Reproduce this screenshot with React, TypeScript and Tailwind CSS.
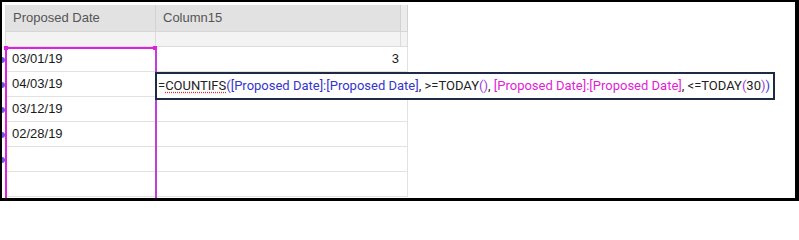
import React from "react";

const rows = ["03/01/19", "04/03/19", "03/12/19", "02/28/19", "", ""];

export default function App() {
  const blue = "text-[#3535cc]";
  const mag = "text-[#e01ed6]";
  const purp = "text-[#9b3be0]";
  return (
    <div className="w-[799px] h-[201px] bg-white border-l-2 border-t-2 border-r-4 border-b-[3px] border-black relative overflow-hidden font-['Liberation_Sans',Arial,sans-serif]">
      <div className="pl-[3px] pt-[3px] h-full">
        <div className="w-[403px] border-l border-[#dedede]">
          {/* header */}
          <div className="flex h-[27px] bg-[#e2e2e2] border-b border-[#d6d6d6] text-[13px] text-[#555]">
            <div className="w-[150px] border-r border-[#d2d2d2] flex items-center pl-[7px]">Proposed Date</div>
            <div className="w-[245px] border-r border-[#d2d2d2] flex items-center pl-[7px]">Column15</div>
            <div className="w-[7px] bg-[#ececec] border-r border-[#d2d2d2]" />
          </div>
          <div className="flex h-[15px] bg-[#f3f3f3] border-b border-[#dcdcdc]">
            <div className="w-[150px] border-r border-[#dcdcdc]" />
            <div className="w-[245px] border-r border-[#dcdcdc]" />
            <div className="w-[7px] border-r border-[#dcdcdc]" />
          </div>
          {rows.map((r, i) => (
            <div key={i} className="flex h-[25px] border-b border-[#e2e2e2] text-[13px] text-[#1a1a1a]">
              <div className="w-[150px] border-r border-[#e2e2e2] flex items-center pl-[6px]">{r}</div>
              <div className="w-[252px] border-r border-[#e2e2e2] flex items-center justify-end pr-[8px]">{i === 0 ? "3" : ""}</div>
            </div>
          ))}
        </div>
      </div>

      {/* selection box */}
      <div className="absolute left-[3px] top-[45px] w-[151.5px] h-[160px]">
        <div className="absolute left-0 top-0 w-full h-[1.5px] bg-[#e020e0]" />
        <div className="absolute left-0 top-0 w-[1.5px] h-full bg-[#e020e0]" />
        <div className="absolute right-0 top-0 w-[1.5px] h-full bg-[#c43ddc]" />
      </div>
      <div className="absolute left-[2px] top-[44px] w-[4px] h-[4px] bg-[#e020e0]" />
      <div className="absolute left-[151px] top-[44px] w-[4px] h-[4px] bg-[#e020e0]" />
      {[55, 80, 105, 130, 155].map((t) => (
        <div key={t} className="absolute left-0 w-[3px] h-[6px] rounded-r-full bg-[#6a5ae0]" style={{ top: t }} />
      ))}

      {/* formula editor */}
      <div className="absolute left-[153px] top-[70px] w-[620px] h-[28px] border-2 border-[#1d2b42] bg-white flex items-center pl-[1px] text-[13px] text-[#222] font-['Roboto',sans-serif]">
        <span className="whitespace-pre">
          <span>=</span>
          <span className="underline decoration-dotted decoration-[color:#e03030] underline-offset-2">COUNTIFS</span>
          <span className={blue}>([Proposed Date]:[Proposed Date]</span>
          <span>{", >=TODAY"}</span>
          <span className={purp}>()</span>
          <span>{", "}</span>
          <span className={mag}>[Proposed Date]:[Proposed Date]</span>
          <span>{", <=TODAY"}</span>
          <span className={purp}>(</span>
          <span>30</span>
          <span className={purp}>)</span>
          <span className={blue}>)</span>
        </span>
      </div>
    </div>
  );
}
